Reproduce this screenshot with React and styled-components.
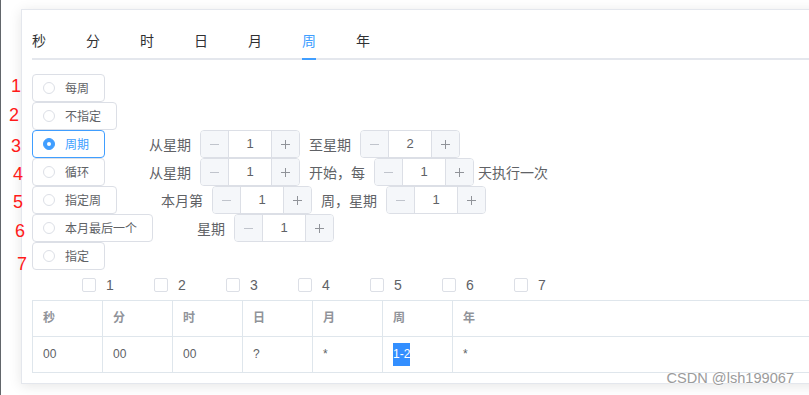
import React from "react";
import styled, { createGlobalStyle } from "styled-components";

const GlobalStyle = createGlobalStyle`
  html, body { margin: 0; padding: 0; background: #fff; overflow: hidden; }
  body { font-family: "Liberation Sans", "Noto Sans CJK SC", sans-serif; }
`;

const Page = styled.div`
  position: relative;
  height: 395px;
  box-sizing: border-box;
  border-left: 1px solid #62666b;
  padding: 9px 0 0 20px;
`;

const Card = styled.div`
  width: 840px;
  box-sizing: border-box;
  border: 1px solid #e4e7ed;
  background: #fff;
  padding: 10px;
  box-shadow: 0 2px 12px 0 rgba(0, 0, 0, 0.1);
`;

const TabNav = styled.div`
  display: flex;
  height: 40px;
  box-shadow: inset 0 -2px 0 #e4e7ed;
  margin-bottom: 14px;
`;

const Tab = styled.div`
  padding: 0 20px;
  &:first-child { padding-left: 0; }
`;

const TabLabel = styled.span`
  display: block;
  height: 40px;
  line-height: 40px;
  font-size: 14px;
  font-family: "Noto Sans CJK SC", sans-serif;
  color: ${(p) => (p.$active ? "#409eff" : "#303133")};
  box-shadow: ${(p) => (p.$active ? "inset 0 -2px 0 #409eff" : "none")};
`;

const Row = styled.div`
  display: flex;
  align-items: center;
  height: 28px;
  gap: 9px;
`;

const RadioBox = styled.label`
  display: flex;
  align-items: center;
  box-sizing: border-box;
  height: 28px;
  padding: 0 15px 0 10px;
  border: 1px solid ${(p) => (p.$checked ? "#409eff" : "#dcdfe6")};
  border-radius: 4px;
  margin-right: 35px;
  flex-shrink: 0;
`;

const RadioDot = styled.span`
  position: relative;
  box-sizing: border-box;
  width: 12px;
  height: 12px;
  border-radius: 50%;
  border: 1px solid ${(p) => (p.$checked ? "#409eff" : "#dcdfe6")};
  background: ${(p) => (p.$checked ? "#409eff" : "#fff")};
  display: flex;
  align-items: center;
  justify-content: center;
  &::after {
    content: "";
    width: 4px;
    height: 4px;
    border-radius: 50%;
    background: #fff;
    display: ${(p) => (p.$checked ? "block" : "none")};
  }
`;

const RadioText = styled.span`
  padding-left: 10px;
  font-size: 12px;
  line-height: 1;
  font-family: "Noto Sans CJK SC", sans-serif;
  color: ${(p) => (p.$checked ? "#409eff" : "#606266")};
  white-space: nowrap;
`;

const Text = styled.span`
  font-size: 14px;
  font-family: "Noto Sans CJK SC", sans-serif;
  color: #606266;
  white-space: nowrap;
  margin-left: ${(p) => (p.$tight ? "-5px" : "0")};
`;

const Spinner = styled.div`
  display: flex;
  box-sizing: border-box;
  width: 100px;
  height: 28px;
  border: 1px solid #dcdfe6;
  border-radius: 4px;
  overflow: hidden;
  flex-shrink: 0;
`;

const SpinBtn = styled.span`
  width: 27px;
  flex-shrink: 0;
  display: flex;
  align-items: center;
  justify-content: center;
  background: #f5f7fa;
  color: ${(p) => (p.$dim ? "#c0c4cc" : "#909399")};
  ${(p) => (p.$side === "left" ? "border-right: 1px solid #dcdfe6;" : "border-left: 1px solid #dcdfe6;")}
`;

const SpinValue = styled.span`
  flex: 1;
  text-align: center;
  line-height: 26px;
  font-size: 13px;
  color: #606266;
`;

const CheckRow = styled.div`
  display: flex;
  align-items: center;
  height: 28px;
  margin: 1px 0 1px 50px;
`;

const CheckItem = styled.label`
  display: flex;
  align-items: center;
  width: 72px;
  flex-shrink: 0;
`;

const CheckBox = styled.span`
  box-sizing: border-box;
  width: 14px;
  height: 14px;
  border: 1px solid #dcdfe6;
  border-radius: 2px;
  background: #fff;
`;

const CheckText = styled.span`
  padding-left: 10px;
  font-size: 14px;
  color: #606266;
`;

const Table = styled.div`
  display: grid;
  grid-template-columns: repeat(6, 70px) 1fr;
  border-top: 1px solid #dfe6ec;
  border-left: 1px solid #dfe6ec;
`;

const Cell = styled.div`
  box-sizing: border-box;
  height: 36px;
  padding: 6px 10px;
  border-right: 1px solid #dfe6ec;
  border-bottom: 1px solid #dfe6ec;
  font-size: 12px;
  line-height: 23px;
  font-family: "Liberation Sans", "Noto Sans CJK SC", sans-serif;
  font-weight: ${(p) => (p.$head ? 700 : 400)};
  color: ${(p) => (p.$head ? "#909399" : "#606266")};
`;

const Selected = styled.span`
  display: inline-block;
  line-height: 23px;
  background: #338fff;
  color: #fff;
`;

const Annotation = styled.span`
  position: absolute;
  left: ${(p) => p.$x}px;
  top: ${(p) => p.$y}px;
  font-family: "Liberation Sans", sans-serif;
  font-size: 18px;
  line-height: 21px;
  color: #ff1a1a;
`;

const Watermark = styled.span`
  position: absolute;
  right: 15px;
  top: 370px;
  font-family: "Liberation Sans", sans-serif;
  font-size: 14.6px;
  color: #9b9b9b;
  text-shadow: 0 0 2px #fff, 0 0 2px #fff;
`;

const Minus = () => (
  <svg width="9" height="9" viewBox="0 0 9 9">
    <line x1="0" y1="4.5" x2="9" y2="4.5" stroke="currentColor" strokeWidth="1" />
  </svg>
);
const Plus = () => (
  <svg width="9" height="9" viewBox="0 0 9 9">
    <line x1="0" y1="4.5" x2="9" y2="4.5" stroke="currentColor" strokeWidth="1" />
    <line x1="4.5" y1="0" x2="4.5" y2="9" stroke="currentColor" strokeWidth="1" />
  </svg>
);

const Radio = ({ label, checked }) => (
  <RadioBox $checked={checked}>
    <RadioDot $checked={checked} />
    <RadioText $checked={checked}>{label}</RadioText>
  </RadioBox>
);

const NumberInput = ({ value }) => (
  <Spinner>
    <SpinBtn $side="left" $dim><Minus /></SpinBtn>
    <SpinValue>{value}</SpinValue>
    <SpinBtn $side="right"><Plus /></SpinBtn>
  </Spinner>
);

const tabs = ["秒", "分", "时", "日", "月", "周", "年"];
const values = ["00", "00", "00", "?", "*", "1-2", "*"];
const marks = [
  { n: 1, x: 10, y: 76 },
  { n: 2, x: 8, y: 105 },
  { n: 3, x: 10, y: 136 },
  { n: 4, x: 12, y: 164 },
  { n: 5, x: 12, y: 192 },
  { n: 6, x: 14, y: 221 },
  { n: 7, x: 16, y: 254 },
];

export default function App() {
  return (
    <>
      <GlobalStyle />
      <Page>
        <Card>
          <TabNav>
            {tabs.map((t) => (
              <Tab key={t}>
                <TabLabel $active={t === "周"}>{t}</TabLabel>
              </Tab>
            ))}
          </TabNav>
          <Row><Radio label="每周" /></Row>
          <Row><Radio label="不指定" /></Row>
          <Row>
            <Radio label="周期" checked />
            <Text>从星期</Text>
            <NumberInput value={1} />
            <Text>至星期</Text>
            <NumberInput value={2} />
          </Row>
          <Row>
            <Radio label="循环" />
            <Text>从星期</Text>
            <NumberInput value={1} />
            <Text>开始，每</Text>
            <NumberInput value={1} />
            <Text $tight>天执行一次</Text>
          </Row>
          <Row>
            <Radio label="指定周" />
            <Text>本月第</Text>
            <NumberInput value={1} />
            <Text>周，星期</Text>
            <NumberInput value={1} />
          </Row>
          <Row>
            <Radio label="本月最后一个" />
            <Text>星期</Text>
            <NumberInput value={1} />
          </Row>
          <Row><Radio label="指定" /></Row>
          <CheckRow>
            {[1, 2, 3, 4, 5, 6, 7].map((n) => (
              <CheckItem key={n}>
                <CheckBox />
                <CheckText>{n}</CheckText>
              </CheckItem>
            ))}
          </CheckRow>
          <Table>
            {tabs.map((t) => (
              <Cell $head key={"h" + t}>{t}</Cell>
            ))}
            {values.map((v, i) => (
              <Cell key={"v" + i}>{i === 5 ? <Selected>{v}</Selected> : v}</Cell>
            ))}
          </Table>
        </Card>
        {marks.map((m) => (
          <Annotation key={m.n} $x={m.x} $y={m.y}>{m.n}</Annotation>
        ))}
        <Watermark>CSDN @lsh199067</Watermark>
      </Page>
    </>
  );
}
